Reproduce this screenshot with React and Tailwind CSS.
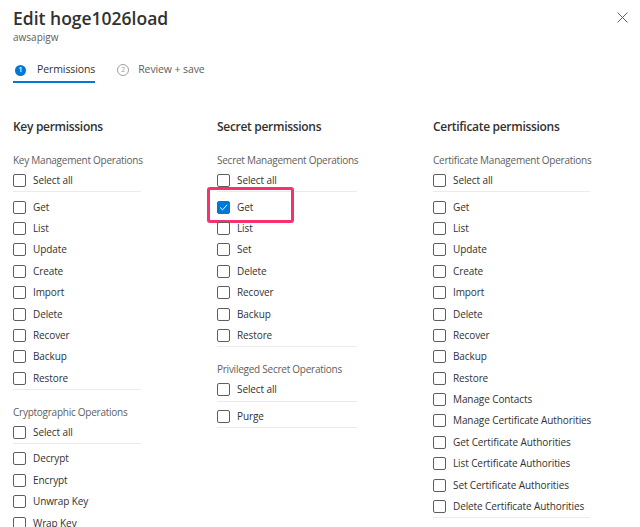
import React from 'react'
import clsx from 'clsx'

const keyOps = ['Get', 'List', 'Update', 'Create', 'Import', 'Delete', 'Recover', 'Backup', 'Restore']
const cryptoOps = ['Decrypt', 'Encrypt', 'Unwrap Key', 'Wrap Key', 'Verify', 'Sign']
const secretOps = ['Get', 'List', 'Set', 'Delete', 'Recover', 'Backup', 'Restore']
const certOps = [
  'Get',
  'List',
  'Update',
  'Create',
  'Import',
  'Delete',
  'Recover',
  'Backup',
  'Restore',
  'Manage Contacts',
  'Manage Certificate Authorities',
  'Get Certificate Authorities',
  'List Certificate Authorities',
  'Set Certificate Authorities',
  'Delete Certificate Authorities',
]

function Check({ label, checked, highlight }) {
  return (
    <div className="relative flex h-[21.4px] items-center gap-[7px]">
      {highlight && (
        // red box drawn over the row in the screenshot
        <div className="pointer-events-none absolute left-[-10px] top-[-9px] h-[36px] w-[87px] rounded-[3px] border-[3.5px] border-[#f7306e]" />
      )}
      <span
        className={clsx(
          'flex h-[13px] w-[13px] shrink-0 items-center justify-center rounded-[2px] border',
          checked ? 'border-[#0078d4] bg-[#0078d4]' : 'border-[#605e5c] bg-white'
        )}
      >
        {checked && (
          <svg width="9" height="9" viewBox="0 0 10 10" fill="none">
            <path d="M1.5 5.2 L4 7.6 L8.6 2.4" stroke="white" strokeWidth="1.1" strokeLinecap="round" strokeLinejoin="round" />
          </svg>
        )}
      </span>
      <span className="whitespace-nowrap text-[10px] tracking-[-0.1px] text-[#323130]">{label}</span>
    </div>
  )
}

function Group({ title, items, checked = [], highlight, first }) {
  return (
    <div className={clsx(!first && 'mt-[14px]')}>
      <div className="mb-[2px] whitespace-nowrap text-[10px] leading-[16px] tracking-[-0.25px] text-[#605e5c]">{title}</div>
      <Check label="Select all" />
      <div className="h-px bg-[#edebe9]" />
      <div className="pt-[4px]">
        {items.map((it) => (
          <Check key={it} label={it} checked={checked.includes(it)} highlight={highlight === it} />
        ))}
      </div>
      <div className="h-px bg-[#edebe9]" />
    </div>
  )
}

function Column({ heading, width, children }) {
  return (
    <div className={clsx('shrink-0', width)}>
      <h2 className="mb-[16px] whitespace-nowrap text-[12px] font-semibold leading-[18px] tracking-[-0.3px] text-[#323130]">
        {heading}
      </h2>
      {children}
    </div>
  )
}

export default function App() {
  return (
    <div
      className="relative h-[527px] w-[640px] overflow-hidden bg-white px-[13px] pt-[6px]"
      style={{ fontFamily: '"Open Sans", "Noto Sans", sans-serif' }}
    >
      <button className="absolute right-[12px] top-[12px] text-[#605e5c]">
        <svg width="11" height="11" viewBox="0 0 11 11">
          <path d="M0.5 0.5 L10.5 10.5 M10.5 0.5 L0.5 10.5" stroke="currentColor" strokeWidth="1" />
        </svg>
      </button>

      <h1 className="text-[17.5px] font-semibold leading-[24px] text-[#323130]">Edit hoge1026load</h1>
      <div className="text-[10px] leading-[14px] text-[#605e5c]">awsapigw</div>

      <div className="mt-[15px] flex h-[24px] items-stretch gap-[22px]">
        <div className="flex items-center gap-[11px] border-b-2 border-[#0078d4] pl-[2px]">
          <span className="flex h-[11px] w-[11px] items-center justify-center rounded-full bg-[#0078d4] text-[7px] font-semibold text-white">
            1
          </span>
          <span className="text-[10.5px] tracking-[-0.1px] text-[#323130]">Permissions</span>
        </div>
        <div className="flex items-center gap-[9px] border-b-2 border-transparent">
          <span className="flex h-[12px] w-[12px] items-center justify-center rounded-full border border-[#a19f9d] text-[7px] text-[#a19f9d]">
            2
          </span>
          <span className="text-[10.5px] tracking-[-0.1px] text-[#605e5c]">Review + save</span>
        </div>
      </div>

      <div className="mt-[35px] flex gap-[76px]">
        <Column heading="Key permissions" width="w-[128px]">
          <Group first title="Key Management Operations" items={keyOps} />
          <Group title="Cryptographic Operations" items={cryptoOps} />
        </Column>
        <Column heading="Secret permissions" width="w-[140px]">
          <Group first title="Secret Management Operations" items={secretOps} checked={['Get']} highlight="Get" />
          <Group title="Privileged Secret Operations" items={['Purge']} />
        </Column>
        <Column heading="Certificate permissions" width="w-[157px]">
          <Group first title="Certificate Management Operations" items={certOps} />
        </Column>
      </div>
    </div>
  )
}
